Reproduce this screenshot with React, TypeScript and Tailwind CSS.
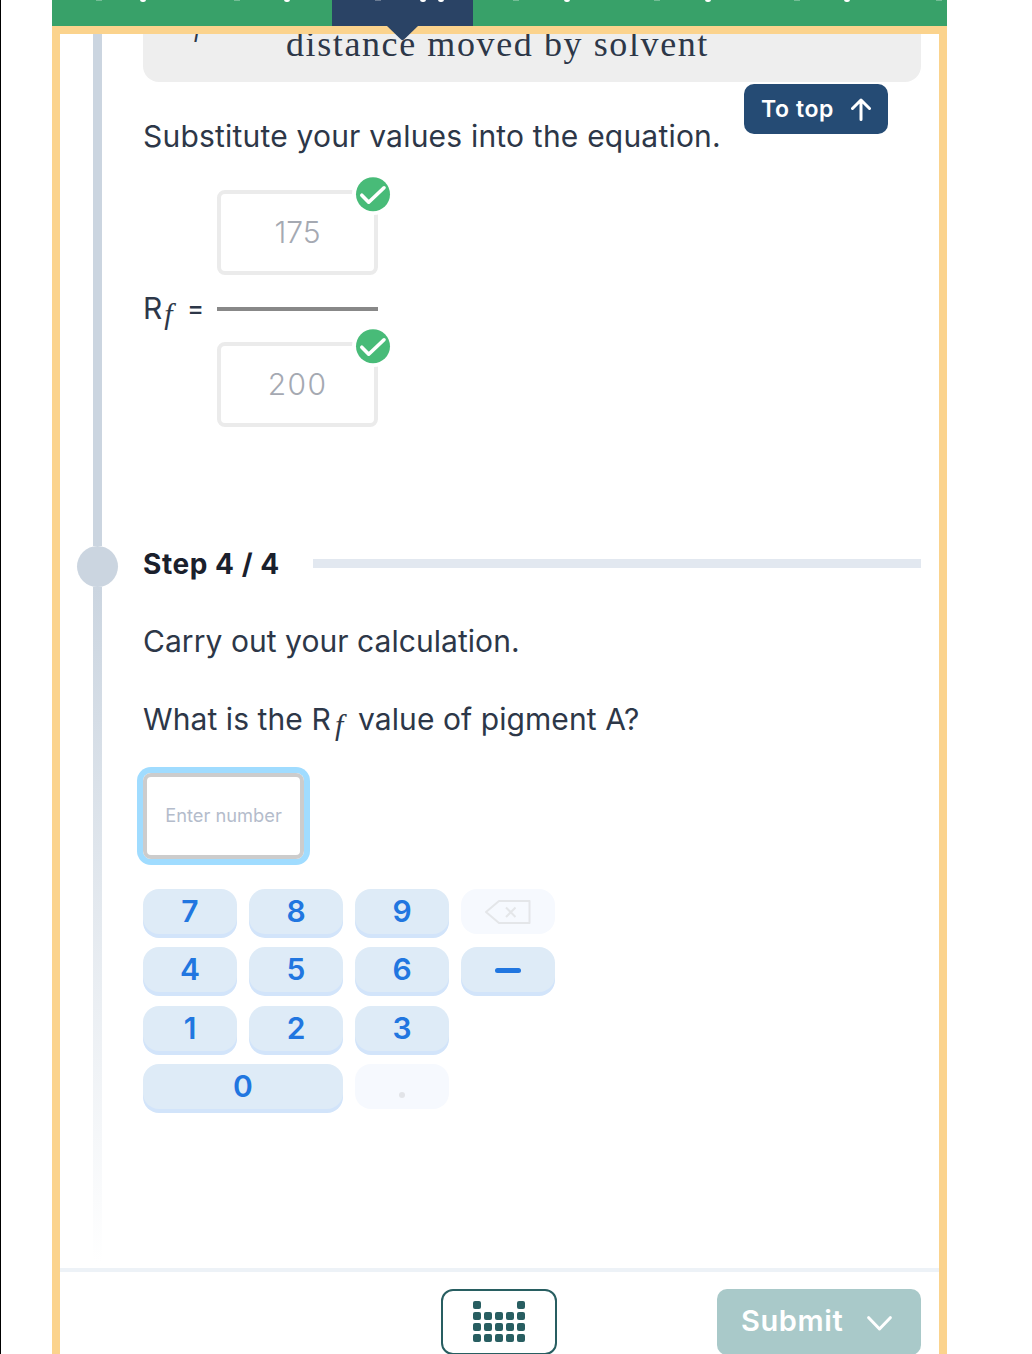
import { ReactNode } from "react";

const tabs = [
  { width: "w-[140px]", marks: ["left-[88px]"], faint: "left-[44px]" },
  { width: "w-[140px]", marks: ["left-[92px]"], faint: "left-[42px]" },
  {
    width: "w-[141px]",
    marks: ["left-[88px]", "left-[106px]"],
    faint: "left-[43px]",
    active: true,
  },
  { width: "w-[141px]", marks: ["left-[91px]"], faint: "left-[40px]" },
  { width: "w-[141px]", marks: ["left-[91px]"], faint: "left-[40px]" },
  { width: "w-[141px]", marks: ["left-[89px]"], faint: "left-[39px]" },
  { width: "w-[51px]", marks: [], faint: "left-[40px]" },
];

function Tabs() {
  return (
    <nav className="flex h-[26px] bg-[#38a169]">
      {tabs.map((tab, index) => (
        <div
          key={index}
          className={`relative h-[26px] shrink-0 ${tab.width} ${
            tab.active ? "bg-[#2a4365]" : ""
          }`}
        >
          {/* bottoms of the scrolled tab labels */}
          <span
            className={`absolute top-0 h-px w-[6px] bg-white/30 ${tab.faint}`}
          />
          {tab.marks.map((mark) => (
            <span
              key={mark}
              className={`absolute -top-[3px] h-[5px] w-[6px] rounded-full bg-white ${mark}`}
            />
          ))}
          {tab.active && (
            <svg
              className="absolute left-[55px] top-[25px] z-10"
              width="31"
              height="16"
              viewBox="0 0 31 16"
            >
              <path d="M0 0H31V1L17 14.6Q15.5 16 14 14.6L0 1Z" fill="#2a4365" />
            </svg>
          )}
        </div>
      ))}
    </nav>
  );
}

function SubF({ className = "" }: { className?: string }) {
  return (
    <span
      className={`inline-block font-['Liberation_Serif',serif] text-[30px] leading-none italic ${className}`}
    >
      f
    </span>
  );
}

function MarkedBox({
  value,
  className = "",
}: {
  value: string;
  className?: string;
}) {
  return (
    <div
      className={`relative flex h-[85px] w-[161px] items-center justify-center rounded-lg border-4 border-[#ebebeb] text-[30px] font-light text-[#a5a9b2] ${className}`}
    >
      {value}
      <svg
        className="absolute -right-[20px] -top-[21px]"
        width="42"
        height="42"
        viewBox="0 0 42 42"
      >
        <circle cx="21" cy="21" r="21" fill="#fff" />
        <circle cx="21" cy="21.3" r="17" fill="#48bb78" />
        <path
          d="M9.8 22.2L16.7 29.2L32 14.8"
          fill="none"
          stroke="#fff"
          strokeWidth="3.6"
          strokeLinecap="round"
          strokeLinejoin="round"
        />
      </svg>
    </div>
  );
}

function Key({
  children,
  wide,
  disabled,
}: {
  children: ReactNode;
  wide?: boolean;
  disabled?: boolean;
}) {
  return (
    <button
      disabled={disabled}
      className={`flex h-[45px] items-center justify-center rounded-2xl text-[30px] font-semibold ${
        wide ? "col-span-2" : ""
      } ${
        disabled
          ? "bg-[#f6f9fe] text-[#e4e6e9]"
          : "bg-[#deebf7] text-[#2176e0] shadow-[0_4px_0_#d2e4fa]"
      }`}
    >
      {children}
    </button>
  );
}

function Keypad() {
  return (
    <div className="mt-[30.5px] grid w-[412px] auto-rows-[45px] grid-cols-4 gap-x-3 gap-y-[13.3px]">
      <Key>7</Key>
      <Key>8</Key>
      <Key>9</Key>
      <Key disabled>
        <svg width="46" height="24" viewBox="0 0 46 24" fill="none" stroke="currentColor">
          <path d="M14 1H44.5V23H14L1 12Z" strokeWidth="2" strokeLinejoin="round" />
          <path d="M21 7.5L30.5 17M30.5 7.5L21 17" strokeWidth="2" />
        </svg>
      </Key>
      <Key>4</Key>
      <Key>5</Key>
      <Key>6</Key>
      <Key>
        <span className="mt-px h-[4.5px] w-[26px] rounded-full bg-[#2176e0]" />
      </Key>
      <Key>1</Key>
      <Key>2</Key>
      <div className="col-span-2 grid grid-cols-2 gap-x-3">
        <Key>3</Key>
      </div>
      <Key wide>0</Key>
      <Key disabled>
        <span className="mt-[17px] size-[6px] rounded-full bg-[#e2e4e8]" />
      </Key>
    </div>
  );
}

function KeyboardIcon() {
  const dots = Array.from({ length: 20 }, (_, i) => i);
  return (
    <div className="grid grid-cols-5 gap-[3px]">
      {dots.map((i) => (
        <span
          key={i}
          className={`size-[8px] rounded-[2px] ${
            i > 0 && i < 4 ? "" : "bg-[#285e61]"
          }`}
        />
      ))}
    </div>
  );
}

export default function App() {
  return (
    <div className="h-[1354px] w-[1032px] overflow-hidden border-l border-black bg-white pl-[51px] font-['Inter',sans-serif] text-[#2d3748]">
      <div className="w-[895px]">
        <Tabs />
        <main className="h-[1340px] border-8 border-[#fbd38d]">
          <div className="relative flex h-[1234px]">
            <div className="flex w-[83px] shrink-0 flex-col">
              <div className="ml-[33px] h-[512px] w-[9px] bg-[#cbd5e0]" />
              <div className="ml-[17px] size-[41px] rounded-full bg-[#cbd5e0]" />
              <div className="ml-[33px] h-[675px] w-[9px] bg-linear-to-b from-[#cbd5e0] to-white" />
            </div>

            <div className="w-[778px]">
              <div className="flex h-[48px] overflow-hidden rounded-b-2xl bg-[#eee] font-['Liberation_Serif',serif]">
                <span className="-mt-[20px] ml-[51px] w-[92px] text-[26px] leading-[30px] italic">
                  f
                </span>
                <span className="-mt-[10px] whitespace-nowrap text-[36px] leading-[40px] tracking-[1.6px]">
                  distance moved by solvent
                </span>
              </div>

              <p className="mt-[34px] whitespace-nowrap text-[30px] leading-[40px] tracking-[0.2px]">
                Substitute your values into the equation.
              </p>

              <div className="mt-[34px] flex h-[237px] items-center">
                <div className="flex w-[74px] text-[30px]">
                  R
                  <SubF className="ml-[2px] mt-[13px] w-[23px]" />
                  <span className="mt-[4px] text-[25px] font-medium">=</span>
                </div>
                <div>
                  <MarkedBox value="175" />
                  <div className="mb-[31px] mt-[32px] h-[4px] bg-[#888]" />
                  <MarkedBox value="200" className="tracking-[1.4px]" />
                </div>
              </div>

              <div className="mt-[115px] flex h-[40px] items-center">
                <h2 className="mt-[3px] w-[169.5px] whitespace-nowrap text-[28px] font-bold tracking-[0.55px] text-[#1a202c]">
                  Step 4 / 4
                </h2>
                <div className="mt-[2px] h-[9px] grow bg-[#e2e8f0]" />
              </div>

              <p className="mt-[39px] whitespace-nowrap text-[30px] leading-[40px] tracking-[0.05px]">
                Carry out your calculation.
              </p>
              <p className="mt-[38px] flex whitespace-nowrap text-[30px] leading-[40px] tracking-[0.08px]">
                <span className="w-[192px]">What is the R</span>
                <SubF className="mt-[11px] w-[23px]" />
                <span>value of pigment A?</span>
              </p>

              <div className="mt-[32.5px] flex h-[86px] w-[161px] items-center justify-center rounded-lg border-4 border-[#ccc] text-[18.3px] text-[#b4bccb] shadow-[0_0_0_6px_#a0dcff]">
                Enter number
              </div>

              <Keypad />
            </div>

            <button className="absolute left-[684px] top-[50px] flex h-[50px] w-[144px] items-center rounded-[10px] bg-[#254b74] pl-[17px] text-[23px] font-semibold tracking-[0.6px] text-white">
              <span className="w-[90px] text-left">To top</span>
              <svg width="20" height="23" viewBox="0 0 20 23" fill="none">
                <path
                  d="M10 21.5V2M1.5 10.5L10 2L18.5 10.5"
                  stroke="#fff"
                  strokeWidth="3"
                  strokeLinecap="round"
                  strokeLinejoin="round"
                />
              </svg>
            </button>
          </div>

          <footer className="flex h-[98px] border-t-4 border-[#edf2f7] pl-[381px] pt-[17px]">
            <button className="flex h-[66px] w-[116px] items-start justify-center rounded-xl border-2 border-[#285e61] pt-[10px]">
              <KeyboardIcon />
            </button>
            <button className="ml-[160px] flex h-[66px] w-[204px] items-center rounded-[10px] bg-[#a9c9c9] pl-[24px] text-[29px] font-semibold tracking-[0.6px] text-white">
              <span className="-mt-[2px] w-[126px] text-left">Submit</span>
              <svg className="mt-[3px]" width="25" height="15" viewBox="0 0 25 15" fill="none">
                <path
                  d="M1.7 1.7L12.5 13L23.3 1.7"
                  stroke="#fff"
                  strokeWidth="3"
                  strokeLinecap="round"
                  strokeLinejoin="round"
                />
              </svg>
            </button>
          </footer>
        </main>
      </div>
    </div>
  );
}
